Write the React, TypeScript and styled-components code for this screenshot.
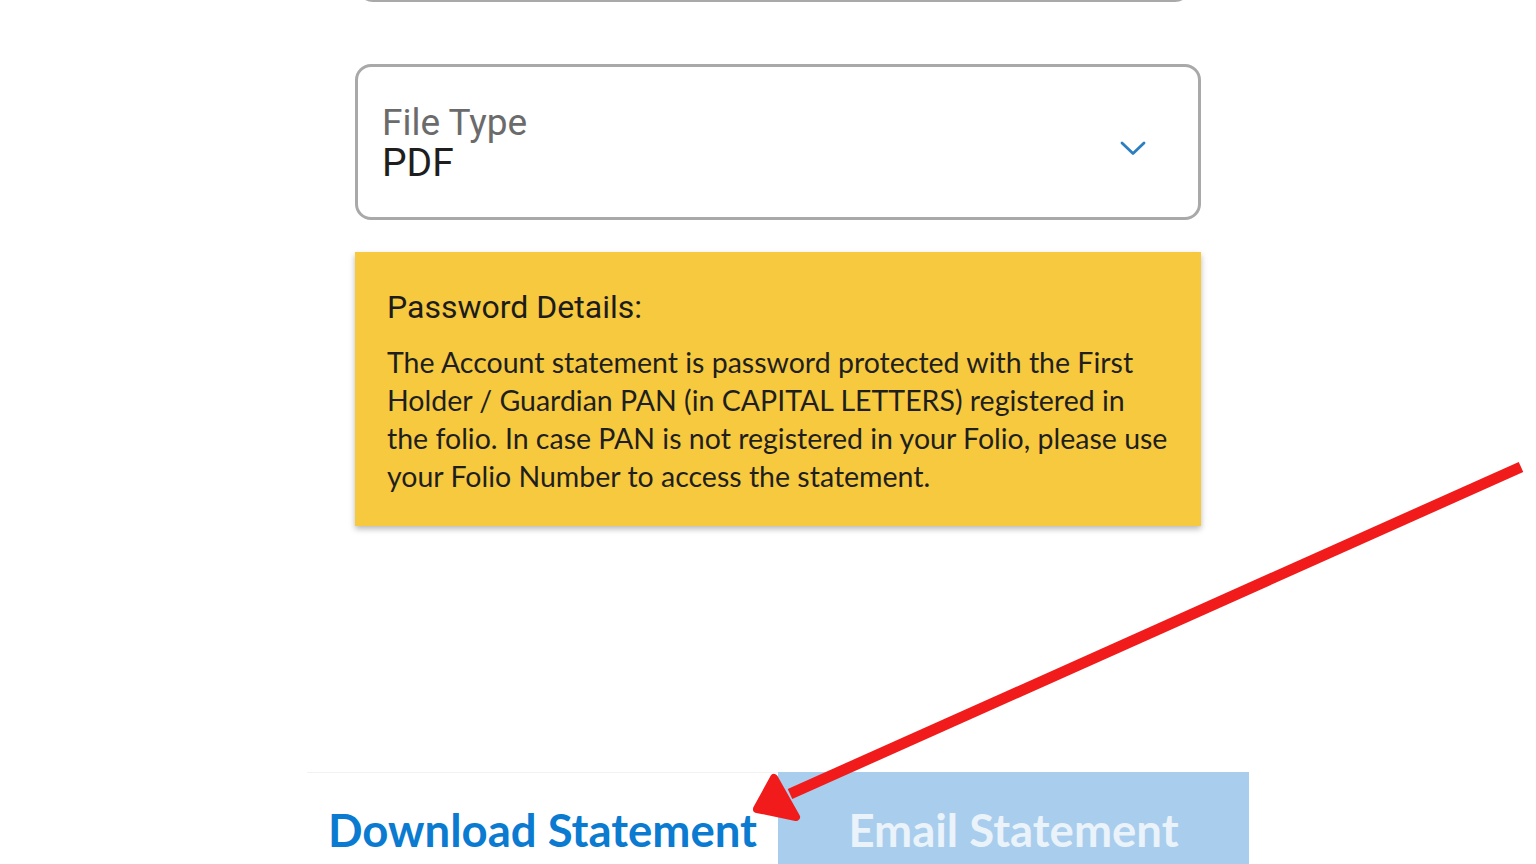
import React from "react";
import styled, { createGlobalStyle } from "styled-components";

const Global = createGlobalStyle`
  html, body { margin: 0; padding: 0; background: #ffffff; }
  body { overflow: hidden; }
`;

const Page = styled.div`
  position: relative;
  width: 1536px;
  height: 864px;
  overflow: hidden;
  box-sizing: border-box;
  padding-left: 20px;
  display: flex;
  flex-direction: column;
  align-items: center;
  background: #ffffff;
`;

const Column = styled.div`
  width: 846px;
  display: flex;
  flex-direction: column;
`;

const Field = styled.div<{ $ghost?: boolean }>`
  box-sizing: border-box;
  height: 156px;
  border: 3px solid #a9a9a9;
  border-radius: 16px;
  background: #ffffff;
  display: flex;
  align-items: center;
  padding: 0 52px 0 24px;
  margin: ${(p) => (p.$ghost ? "-154px 10px 0 2px" : "62px 0 0 0")};
`;

const FieldText = styled.div`
  flex: 1;
  display: flex;
  flex-direction: column;
  font-family: Roboto, "Liberation Sans", sans-serif;
  margin-top: 2px;
`;

const Label = styled.div`
  font-size: 37px;
  line-height: 41px;
  color: #6b6b6b;
`;

const Value = styled.div`
  font-size: 39px;
  line-height: 41px;
  color: #1e1e1e;
`;

const Chevron = styled.svg`
  width: 26px;
  height: 16px;
  margin-top: 12px;
`;

const Notice = styled.div`
  margin-top: 32px;
  box-sizing: border-box;
  height: 274px;
  background: #f6c93f;
  box-shadow: 0 3px 6px rgba(0, 0, 0, 0.28);
  padding: 37px 36px 0 32px;
`;

const NoticeTitle = styled.div`
  font-family: Roboto, "Liberation Sans", sans-serif;
  font-size: 32px;
  line-height: 36px;
  color: #1c1c1c;
`;

const NoticeBody = styled.p`
  margin: 18px 0 0 0;
  font-family: Lato, "Liberation Sans", sans-serif;
  font-size: 28.5px;
  line-height: 38px;
  color: #1f1f1f;
  white-space: nowrap;
`;

const ButtonRow = styled.div`
  margin-top: 246px;
  width: 942px;
  height: 118px;
  display: flex;
`;

const ActionButton = styled.div<{ $primary?: boolean }>`
  flex: 1;
  display: flex;
  align-items: center;
  justify-content: center;
  box-sizing: border-box;
  padding-top: 22px;
  font-family: Lato, "Liberation Sans", sans-serif;
  font-weight: 700;
  font-size: 45.5px;
  border-top: 1px solid ${(p) => (p.$primary ? "#f2f2f2" : "#a9cdec")};
  background: ${(p) => (p.$primary ? "#ffffff" : "#a9cdec")};
  color: ${(p) => (p.$primary ? "#0a7bd0" : "#eaf2fa")};
`;

const ArrowLayer = styled.svg`
  position: absolute;
  left: 0;
  top: 0;
  width: 1536px;
  height: 864px;
  pointer-events: none;
`;

const bodyLines = [
  "The Account statement is password protected with the First",
  "Holder / Guardian PAN (in CAPITAL LETTERS) registered in",
  "the folio. In case PAN is not registered in your Folio, please use",
  "your Folio Number to access the statement.",
];

export default function App() {
  return (
    <>
      <Global />
      <Page>
        <Column>
          <Field $ghost />
          <Field>
            <FieldText>
              <Label>File Type</Label>
              <Value>PDF</Value>
            </FieldText>
            <Chevron viewBox="0 0 26 16">
              <polyline
                points="2,3 13,13.5 24,3"
                fill="none"
                stroke="#2b7fc1"
                strokeWidth="2.8"
                strokeLinecap="round"
                strokeLinejoin="round"
              />
            </Chevron>
          </Field>
          <Notice>
            <NoticeTitle>Password Details:</NoticeTitle>
            <NoticeBody>
              {bodyLines.map((line, i) => (
                <React.Fragment key={i}>
                  {line}
                  {i < bodyLines.length - 1 && <br />}
                </React.Fragment>
              ))}
            </NoticeBody>
          </Notice>
        </Column>
        <ButtonRow>
          <ActionButton $primary>Download Statement</ActionButton>
          <ActionButton>Email Statement</ActionButton>
        </ButtonRow>
        <ArrowLayer viewBox="0 0 1536 864">
          <line
            x1="1521"
            y1="467"
            x2="790"
            y2="794"
            stroke="#f21b1b"
            strokeWidth="11"
          />
          <polygon
            points="757,809 774,778 796,817"
            fill="#f21b1b"
            stroke="#f21b1b"
            strokeWidth="8"
            strokeLinejoin="round"
          />
        </ArrowLayer>
      </Page>
    </>
  );
}
